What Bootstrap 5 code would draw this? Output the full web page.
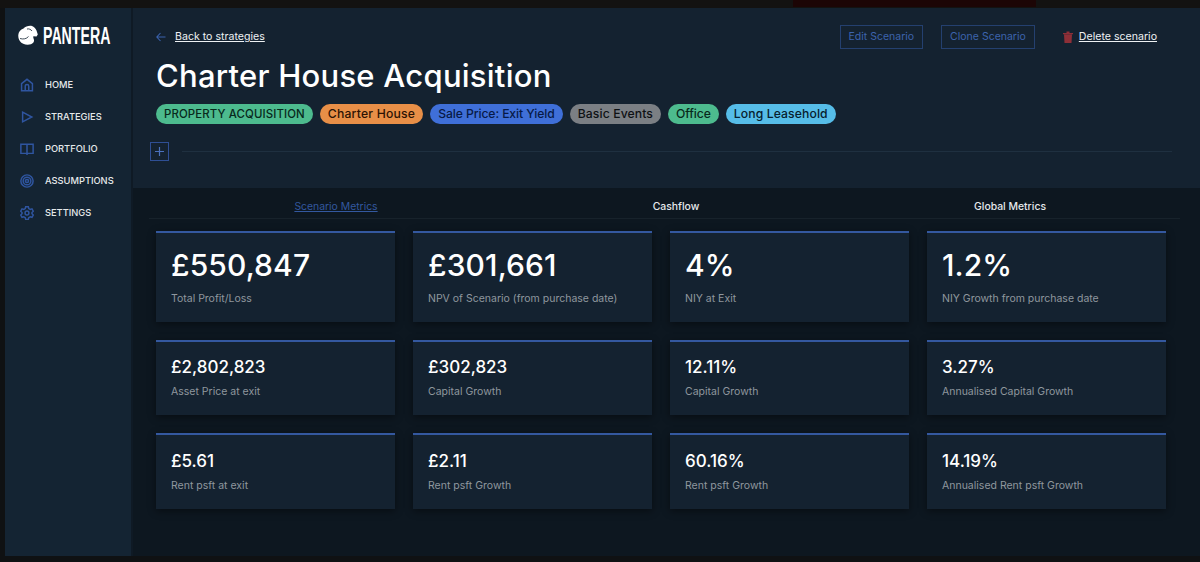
<!DOCTYPE html>
<html lang="en"><head><meta charset="utf-8"><title>Pantera</title>
<link rel="stylesheet" href="https://cdn.jsdelivr.net/npm/bootstrap@5.3.0/dist/css/bootstrap.min.css">
<style>
html,body{height:562px;overflow:hidden}
body{background:#0f1113;font-family:Inter,"Liberation Sans",sans-serif;color:#fff;position:relative}
.topstrip{height:8px;background:#131211}
.redbit{width:243px;height:7px;background:#1c0505;margin-left:793px}
.shell{height:548px;margin-left:5px}
.side{width:126px;background:#142433;flex:none}
.gutter{width:2px;background:#0f1a25;flex:none}
.mainp{background:#0d1720;min-width:0}
.logo{height:55px;padding:17px 0 0 13px;gap:5px}
.logo svg{flex:none}
.logotxt{flex:none;font-family:"Liberation Sans",sans-serif;font-weight:700;font-size:24px;line-height:22px;transform:scaleX(.59);transform-origin:left;white-space:nowrap}
.mitem{height:32px;padding-left:15px;gap:11px;font-size:9.3px;font-weight:500;color:#e5e8ea;text-decoration:none}
.mlist{margin-top:6px}
.mitem svg{width:14px;height:14px;flex:none;fill:none;stroke:#2f55a0;stroke-width:1.7}
.hdr{height:180px;background:#142230;padding:0 43px 0 23px;position:relative}
.hrow1{height:49px;padding-top:17px}
.backlnk{color:#eef1f3;font-size:10.6px;text-decoration:underline;gap:9px;height:24px}
.backdel{gap:6px}
.backlnk svg,.trash{flex:none}
.ttl{font-size:31px;font-weight:500;line-height:38px;margin:0;letter-spacing:.25px}
.chips{gap:7px;margin-top:9px;height:20px}
.chip{border-radius:10px;height:20px;line-height:20px;padding:0 8px;font-size:12.2px;font-weight:500;letter-spacing:.1px}
.chipcaps{font-size:11.45px}
.chipw{letter-spacing:.2px}
.chipn{letter-spacing:-.1px}
.chipo{letter-spacing:-.1px}
.c-g{background:#4dbb8e;color:#08291c}.c-o{background:#e88f47;color:#2c1304}.c-b{background:#3f6fd8;color:#071a47}.c-k{background:#7b7f84;color:#0e1114}.c-c{background:#56bde8;color:#07202e}
.addrow{margin:18px 0 0 -6px;gap:13px}
.addbtn{width:19px;height:19px;border:1px solid #2f4f94;color:#4b71bd;background:none;padding:0;display:flex;align-items:center;justify-content:center}
.hline{height:1px;background:#1f3040;flex:1;margin-right:-15px}
.obtn{height:24px;border:1px solid #24406f;color:#3d64ad;font-size:10.5px;border-radius:0;padding:0 8px;background:none;line-height:22px}
.gapb{margin-left:18px;margin-right:28px}
.tabsx{height:31px;margin:0 20px 0 16px;border-bottom:1px solid #17222b;font-size:10.4px;font-weight:500}
.tabx{text-align:center;color:#e6e9ec;text-decoration:none;line-height:37px;flex:none}
.tabx.on{color:#33589f;text-decoration:underline;font-weight:400}
.tab1{width:374px}.tab2{width:306px}.tab3{width:362px;margin-right:-11px}
.mgrid{display:grid;grid-template-columns:repeat(4,239px);gap:18px;grid-template-rows:91px 75px 76px;padding:12px 0 0 23px}
.mcard{background:#142230;border-top:2px solid #34589f;border-radius:0;border-left:0;border-right:0;border-bottom:0;padding:0 15px;box-shadow:0 2px 8px rgba(0,0,0,.45)}
.big{font-size:30px;font-weight:500;line-height:38px;margin-top:13px;letter-spacing:.1px}
.med{font-size:17px;font-weight:500;line-height:22px;margin-top:14px}
.medl{margin-top:15px}
.lab{font-size:10.5px;color:#8f979e;line-height:14px}
.big + .lab{margin-top:8px}.med + .lab{margin-top:7px}
</style></head><body>
<div class="topstrip"><div class="redbit"></div></div>
<div class="shell d-flex">
<aside class="side">
<div class="logo d-flex align-items-start">
<svg width="20" height="20" viewBox="0 0 20 20"><path fill="#fff" d="M.3 10C.5 7 2.500 4.500 5.500 3.500C7.500 1.500 11 .3 14 1C16 1.800 17.500 3.500 18.500 5.500L19.800 9.500L18.500 11.500L15.500 11.200C14.800 12 15.500 13.500 16 15C16.300 17 15 18.500 13 19.200C9 20.300 4 19.300 2 16.300C.8 14.500 .1 12 .3 10Z"/><path fill="none" stroke="#142433" stroke-width=".8" d="M2 13.500C5 14.500 8.500 14 10.500 11.500M9 4C11 3.500 13 4.500 14 6"/></svg>
<span class="logotxt">PANTERA</span></div>
<nav class="mlist d-flex flex-column">
<a class="mitem d-flex align-items-center" href="#"><svg viewBox="0 0 16 16"><path d="M1.800 6.500 8 1.500l6.200 5V14.500H1.800ZM6 14.500V9.500a2 2 0 0 1 4 0V14.500"/></svg>HOME</a>
<a class="mitem d-flex align-items-center" href="#"><svg viewBox="0 0 16 16"><path d="M3 2.500 13.500 8 3 13.500Z"/></svg>STRATEGIES</a>
<a class="mitem d-flex align-items-center" href="#"><svg viewBox="0 0 16 16"><path d="M1 2.500H8V13H1ZM8 2.500h7V13H8ZM8 13v1.800"/></svg>PORTFOLIO</a>
<a class="mitem d-flex align-items-center" href="#"><svg viewBox="0 0 16 16"><circle cx="8" cy="8" r="7"/><circle cx="8" cy="8" r="4.400"/><circle cx="8" cy="8" r="1.800"/></svg>ASSUMPTIONS</a>
<a class="mitem d-flex align-items-center" href="#"><svg viewBox="0 0 16 16"><path d="M6.500 .9h3l.5 2 1.700 1 2-.6 1.500 2.600-1.500 1.500v1.400l1.500 1.500-1.500 2.600-2-.6-1.700 1-.5 2h-3l-.5-2-1.700-1-2 .6L.8 10.300l1.500-1.500V7.400L.8 5.900l1.500-2.600 2 .6 1.700-1Z"/><circle cx="8" cy="8" r="2.200"/></svg>SETTINGS</a>
</nav>
</aside>
<div class="gutter"></div>
<main class="mainp flex-grow-1">
<section class="hdr">
<div class="hrow1 d-flex align-items-start justify-content-between">
<a class="backlnk d-flex align-items-center" href="#"><svg width="10" height="10" viewBox="0 0 10 10" fill="none" stroke="#3a62ad" stroke-width="1.100"><path d="M9.500 5H.8M4.500 1 .8 5l3.700 4"/></svg><span>Back to strategies</span></a>
<div class="d-flex align-items-center">
<button class="obtn btn">Edit Scenario</button>
<button class="obtn btn gapb">Clone Scenario</button>
<a class="backlnk backdel d-flex align-items-center" href="#"><svg class="trash" width="10" height="12" viewBox="0 0 10 12"><path fill="#8e2f37" d="M0 2h10v1.200H0ZM3.500 .5h3V2h-3ZM1 3.500h8L8.500 12h-7Z"/></svg><span>Delete scenario</span></a>
</div></div>
<h1 class="ttl">Charter House Acquisition</h1>
<div class="chips d-flex">
<span class="chip chipcaps c-g">PROPERTY ACQUISITION</span><span class="chip chipw c-o">Charter House</span><span class="chip chipn c-b">Sale Price: Exit Yield</span><span class="chip c-k">Basic Events</span><span class="chip chipo c-g">Office</span><span class="chip c-c">Long Leasehold</span>
</div>
<div class="addrow d-flex align-items-center">
<button class="addbtn" aria-label="Add"><svg width="9" height="9" viewBox="0 0 9 9" stroke="#4b71bd" stroke-width="1.200"><path d="M4.500 0v9M0 4.500h9"/></svg></button><div class="hline"></div>
</div>
</section>
<div class="tabsx d-flex">
<a class="tabx tab1 on" href="#">Scenario Metrics</a><a class="tabx tab2" href="#">Cashflow</a><a class="tabx tab3" href="#">Global Metrics</a>
</div>
<div class="mgrid">
<div class="mcard card"><div class="big">£550,847</div><div class="lab">Total Profit/Loss</div></div>
<div class="mcard card"><div class="big">£301,661</div><div class="lab">NPV of Scenario (from purchase date)</div></div>
<div class="mcard card"><div class="big">4%</div><div class="lab">NIY at Exit</div></div>
<div class="mcard card"><div class="big">1.2%</div><div class="lab">NIY Growth from purchase date</div></div>
<div class="mcard card"><div class="med">£2,802,823</div><div class="lab">Asset Price at exit</div></div>
<div class="mcard card"><div class="med">£302,823</div><div class="lab">Capital Growth</div></div>
<div class="mcard card"><div class="med">12.11%</div><div class="lab">Capital Growth</div></div>
<div class="mcard card"><div class="med">3.27%</div><div class="lab">Annualised Capital Growth</div></div>
<div class="mcard card"><div class="med medl">£5.61</div><div class="lab">Rent psft at exit</div></div>
<div class="mcard card"><div class="med medl">£2.11</div><div class="lab">Rent psft Growth</div></div>
<div class="mcard card"><div class="med medl">60.16%</div><div class="lab">Rent psft Growth</div></div>
<div class="mcard card"><div class="med medl">14.19%</div><div class="lab">Annualised Rent psft Growth</div></div>
</div>
</main>
</div>
</body></html>
